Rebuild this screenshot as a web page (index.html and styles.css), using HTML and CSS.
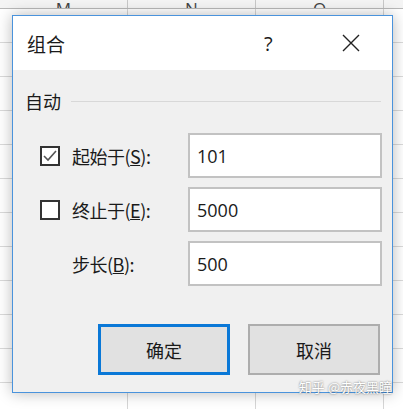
FILE: index.html
```html
<!DOCTYPE html>
<html lang="zh-CN">
<head>
    <meta charset="UTF-8">
    <title>组合</title>
    <link rel="stylesheet" href="styles.css">
</head>
<body>
    <div class="sheet">
        <div class="col-head">
            <div class="col-cell">M</div>
            <div class="col-cell">N</div>
            <div class="col-cell">O</div>
            <div class="col-cell"></div>
        </div>
        <div class="grid"></div>

        <div class="dialog">
            <div class="titlebar">
                <span class="title">组合</span>
                <span class="help">?</span>
                <span class="close">
                    <svg width="18" height="18" viewBox="0 0 18 18"><path d="M1 1 L17 17 M17 1 L1 17" stroke="#222" stroke-width="1.4" fill="none"/></svg>
                </span>
            </div>
            <div class="content">
                <div class="group-head">
                    <span>自动</span>
                    <div class="group-line"></div>
                </div>
                <div class="rows">
                    <div class="row">
                        <span class="check">
                            <svg width="16" height="16" viewBox="0 0 16 16"><path d="M2 8 L6 12 L14 3" stroke="#555" stroke-width="1.6" fill="none"/></svg>
                        </span>
                        <label class="label">起始于(<u>S</u>):</label>
                        <div class="field">101</div>
                    </div>
                    <div class="row">
                        <span class="check"></span>
                        <label class="label">终止于(<u>E</u>):</label>
                        <div class="field">5000</div>
                    </div>
                    <div class="row">
                        <span class="check blank"></span>
                        <label class="label">步长(<u>B</u>):</label>
                        <div class="field">500</div>
                    </div>
                </div>
                <div class="buttons">
                    <button class="btn primary">确定</button>
                    <button class="btn">取消</button>
                </div>
            </div>
        </div>
        <div class="watermark">知乎 @赤夜黑瞳</div>
    </div>
</body>
</html>
```

FILE: styles.css
```css
body {
    margin: 0;
    font-family: "Noto Sans CJK SC", "Noto Sans", sans-serif;
    color: #1a1a1a;
    background: #fff;
}
.sheet {
    position: relative;
    width: 403px;
    height: 409px;
    overflow: hidden;
}
.col-head {
    display: flex;
    height: 8px;
    overflow: hidden;
    border-bottom: 1px solid #b8b8b8;
    background: #f4f4f4;
}
.col-cell {
    width: 127px;
    flex-shrink: 0;
    border-right: 1px solid #c8c8c8;
    text-align: center;
    font-family: "Open Sans", sans-serif;
    font-size: 17px;
    line-height: 17px;
    margin-top: -11px;
    padding-top: 11px;
    color: #444;
    box-sizing: content-box;
}
.grid {
    height: 400px;
    background-image:
        linear-gradient(to right, transparent 127px, #d6d6d6 127px, #d6d6d6 128px, transparent 128px,
                                  transparent 255px, #d6d6d6 255px, #d6d6d6 256px, transparent 256px,
                                  transparent 383px, #d6d6d6 383px, #d6d6d6 384px, transparent 384px),
        repeating-linear-gradient(to bottom, transparent 0, transparent 33px, #dadada 33px, #dadada 34px);
}
.dialog {
    position: absolute;
    left: 12px;
    top: 15px;
    width: 379px;
    border: 1px solid #4a93dc;
    background: #f0f0f0;
    box-shadow: 0 0 14px rgba(0, 0, 0, 0.28);
}
.titlebar {
    display: flex;
    align-items: center;
    height: 54px;
    background: #fff;
    padding-left: 14px;
}
.title {
    font-size: 19px;
    flex: 1;
}
.help {
    font-family: "Open Sans", sans-serif;
    font-size: 20px;
    width: 20px;
    margin-right: 58px;
}
.close {
    display: flex;
    margin-right: 32px;
}
.content {
    padding: 20px 10px 17px 12px;
}
.group-head {
    display: flex;
    align-items: center;
    height: 22px;
    font-size: 18px;
    gap: 10px;
}
.group-line {
    flex: 1;
    height: 1px;
    background: #d8d8d8;
    margin-right: 1px;
}
.rows {
    display: flex;
    flex-direction: column;
    gap: 9px;
    margin-top: 21px;
    padding-left: 15px;
}
.row {
    display: flex;
    align-items: center;
    height: 45px;
}
.check {
    width: 16px;
    height: 16px;
    border: 2px solid #333;
    background: #fff;
    display: flex;
    align-items: center;
    justify-content: center;
    flex-shrink: 0;
}
.check.blank {
    visibility: hidden;
}
.label {
    font-size: 18px;
    width: 116px;
    margin-left: 12px;
    letter-spacing: -0.5px;
}
.field {
    flex: 1;
    height: 41px;
    border: 2px solid #c2c2c2;
    background: #fff;
    display: flex;
    align-items: center;
    padding-left: 7px;
    font-family: "Open Sans", sans-serif;
    font-size: 18px;
}
.buttons {
    display: flex;
    justify-content: flex-end;
    gap: 18px;
    margin-top: 38px;
    padding-right: 2px;
}
.btn {
    width: 132px;
    height: 51px;
    background: #e1e1e1;
    border: 2px solid #adadad;
    font-family: "Noto Sans CJK SC", sans-serif;
    font-size: 18px;
    color: #1a1a1a;
    padding: 0;
}
.btn.primary {
    border: 3px solid #0a78d7;
}
.watermark {
    position: absolute;
    right: 11px;
    bottom: 13px;
    font-size: 13px;
    color: #fff;
    text-shadow: 0 0 2px rgba(0, 0, 0, 0.6);
}
```
